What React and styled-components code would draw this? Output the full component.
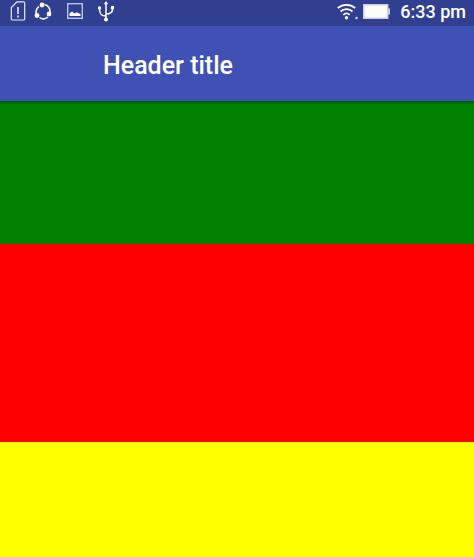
import React from 'react';
import styled, { createGlobalStyle } from 'styled-components';

const Global = createGlobalStyle`
  html, body {
    margin: 0;
    padding: 0;
    background: #ffff00;
  }
`;

const Screen = styled.div`
  width: 474px;
  height: 557px;
  display: flex;
  flex-direction: column;
  overflow: hidden;
  font-family: Roboto, 'Liberation Sans', sans-serif;
`;

const StatusBar = styled.div`
  height: 26px;
  flex: none;
  box-sizing: border-box;
  padding: 0 8px 4px 10px;
  background: #303f8f;
  display: flex;
  align-items: center;
  justify-content: space-between;
  color: #fff;
`;

const StatusGroup = styled.div`
  display: flex;
  align-items: center;
`;

const IconSlot = styled.span`
  display: flex;
  margin-left: ${({ $gap }) => $gap || 0}px;
`;

const Clock = styled.span`
  font-size: 18px;
  font-weight: 500;
  margin-left: 10px;
`;

const Header = styled.div`
  height: 75px;
  flex: none;
  background: #3f51b5;
  display: flex;
  align-items: center;
  padding: 3px 0 0 103px;
  box-sizing: border-box;
`;

const Title = styled.div`
  color: #fff;
  font-size: 25px;
  font-weight: 500;
`;

const Band = styled.div`
  height: ${({ $h }) => $h}px;
  flex: none;
  background: ${({ $color }) => $color};
`;

const TopBand = styled(Band)`
  box-shadow: inset 0 3px 2px -1px rgba(0, 0, 0, 0.25);
`;

const SimIcon = () => (
  <svg width="16" height="20" viewBox="0 0 16 20" fill="none" stroke="#e8eaf6" strokeWidth="1.2">
    <path d="M7 0.8h6.5a1.2 1.2 0 0 1 1.2 1.2v15.8a1.2 1.2 0 0 1-1.2 1.2h-11a1.2 1.2 0 0 1-1.2-1.2V6.5z" />
    <path d="M8 6v7M8 14.5v2" strokeWidth="1.6" />
  </svg>
);

const ShareIcon = () => (
  <svg width="18" height="18" viewBox="0 0 18 18" fill="none" stroke="#fff">
    <path d="M5 4.5a7 7 0 0 0-2.8 7M5.5 15.5a7 7 0 0 0 8.5-.5M16 10a7 7 0 0 0-5.5-7.5" strokeWidth="1.5" />
    <circle cx="8" cy="3" r="2.4" fill="#fff" stroke="none" />
    <circle cx="3" cy="13.5" r="2.4" fill="#fff" stroke="none" />
    <circle cx="15" cy="12" r="2.4" fill="#fff" stroke="none" />
  </svg>
);

const ImageIcon = () => (
  <svg width="16" height="16" viewBox="0 0 16 16">
    <rect x="0.7" y="0.7" width="14.6" height="14.6" fill="none" stroke="#c9cde6" strokeWidth="1.3" />
    <path d="M2.5 13v-2.5L5 8.5l2.5 2 2-1.2 4 1.7V13z" fill="#fff" />
  </svg>
);

const UsbIcon = () => (
  <svg width="18" height="21" viewBox="0 0 18 21" fill="none" stroke="#fff" strokeWidth="1.5">
    <path d="M9 3v15M9 15c-5 0-6.5-2-6.5-7M9 13c5 0 6.5-2 6.5-5" />
    <path d="M9 0l2.2 3.2H6.800z" fill="#fff" stroke="none" />
    <circle cx="9" cy="18.5" r="2" fill="#fff" stroke="none" />
    <circle cx="2.5" cy="7" r="1.7" fill="#fff" stroke="none" />
    <rect x="13.9" y="5" width="3.2" height="3.2" fill="#fff" stroke="none" />
  </svg>
);

const WifiIcon = () => (
  <svg width="21" height="18" viewBox="0 0 21 18" fill="none" stroke="#fff" strokeWidth="1.8">
    <path d="M0.8 6a13.500 13.500 0 0 1 17.400 0M3.500 9.500a9 9 0 0 1 12 0M6.300 12.800a4.600 4.600 0 0 1 6.400 0" />
    <circle cx="9.5" cy="15.8" r="1.7" fill="#fff" stroke="none" />
    <circle cx="19.500" cy="16" r="1.2" fill="#dfe2f2" stroke="none" />
  </svg>
);

const BatteryIcon = () => (
  <svg width="27" height="15" viewBox="0 0 27 15">
    <rect x="0.75" y="0.75" width="24" height="13.5" fill="#fdfdf8" stroke="#c9cde6" strokeWidth="1.5" />
    <rect x="25" y="4.5" width="2" height="6" fill="#c9cde6" />
  </svg>
);

const App = () => (
  <Screen>
    <Global />
    <StatusBar>
      <StatusGroup>
        <IconSlot><SimIcon /></IconSlot>
        <IconSlot $gap={8}><ShareIcon /></IconSlot>
        <IconSlot $gap={15}><ImageIcon /></IconSlot>
        <IconSlot $gap={14}><UsbIcon /></IconSlot>
      </StatusGroup>
      <StatusGroup>
        <IconSlot><WifiIcon /></IconSlot>
        <IconSlot $gap={5}><BatteryIcon /></IconSlot>
        <Clock>6:33 pm</Clock>
      </StatusGroup>
    </StatusBar>
    <Header>
      <Title>Header title</Title>
    </Header>
    <TopBand $h={143} $color="#008000" />
    <Band $h={198} $color="#ff0000" />
    <Band $h={115} $color="#ffff00" />
  </Screen>
);

export default App;
